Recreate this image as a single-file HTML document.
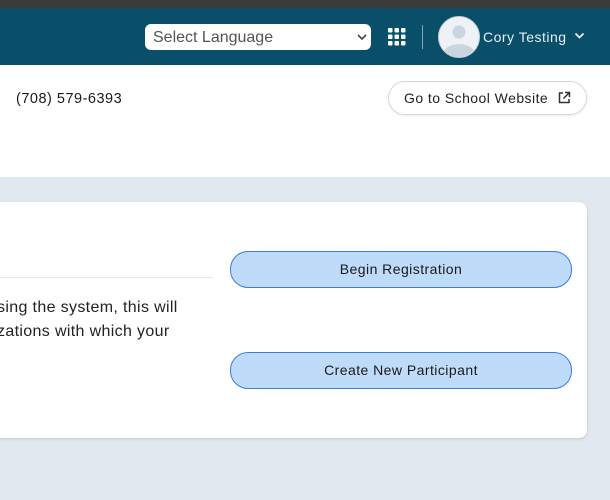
<!DOCTYPE html>
<html><head><style>
body{margin:0;width:610px;height:500px;overflow:hidden;background:#e1e8f0;font-family:"Liberation Sans",sans-serif;position:relative}
.abs{position:absolute}
</style></head><body>
<div class="abs" style="left:0;top:0;width:610px;height:8px;background:#3b3b3b"></div>
<div class="abs" style="left:0;top:8px;width:610px;height:57px;background:#0a4f69"></div>
<div class="abs" style="left:145px;top:24px;width:226px;height:26px;background:#fff;border-radius:6px"></div>
<div class="abs" style="left:153px;top:29px;font-size:16px;color:#555">Select Language</div>
<svg class="abs" style="left:357px;top:33px" width="10" height="8"><path d="M1 2l4 4 4-4" stroke="#444" stroke-width="1.6" fill="none"/></svg>
<svg class="abs" style="left:388px;top:28px" width="18" height="18" fill="#fff">
<rect x="0" y="0" width="4.5" height="4.5" rx="1"/><rect x="6.5" y="0" width="4.5" height="4.5" rx="1"/><rect x="13" y="0" width="4.5" height="4.5" rx="1"/>
<rect x="0" y="6.5" width="4.5" height="4.5" rx="1"/><rect x="6.5" y="6.5" width="4.5" height="4.5" rx="1"/><rect x="13" y="6.5" width="4.5" height="4.5" rx="1"/>
<rect x="0" y="13" width="4.5" height="4.5" rx="1"/><rect x="6.5" y="13" width="4.5" height="4.5" rx="1"/><rect x="13" y="13" width="4.5" height="4.5" rx="1"/></svg>
<div class="abs" style="left:422px;top:25px;width:1px;height:24px;background:#8aa6b4"></div>
<svg class="abs" style="left:438px;top:16px" width="42" height="42"><defs><clipPath id="c"><circle cx="21" cy="21" r="20"/></clipPath></defs>
<circle cx="21" cy="21" r="20.5" fill="#eef2f7" stroke="#c8d2dc"/><g clip-path="url(#c)" fill="#cbd5df"><circle cx="21" cy="16" r="6.5"/><ellipse cx="21" cy="40" rx="17" ry="12"/></g></svg>
<div class="abs" style="left:483px;top:29px;font-size:14px;letter-spacing:.5px;color:#e6eef3">Cory Testing</div>
<svg class="abs" style="left:574px;top:32px" width="11" height="8"><path d="M1.5 1.5l4 4 4-4" stroke="#e6eef3" stroke-width="1.8" fill="none"/></svg>
<div class="abs" style="left:0;top:65px;width:610px;height:112px;background:#fff"></div>
<div class="abs" style="left:16px;top:91px;font-size:14.5px;letter-spacing:.5px;color:#1a1a1a">(708) 579-6393</div>
<div class="abs" style="left:388px;top:81px;width:197px;height:32px;border:1px solid #cfd8e2;border-radius:17px;background:#fff;box-shadow:0 1px 2px rgba(0,0,0,.08)"></div>
<div class="abs" style="left:404px;top:90px;font-size:14px;letter-spacing:.45px;color:#222">Go to School Website</div>
<svg class="abs" style="left:557px;top:91px" width="14" height="14"><path d="M6 2H2.5v9.5H12V8M8 1.5h4.5V6M12.5 1.5L6.5 7.5" stroke="#333" stroke-width="1.5" fill="none"/></svg>
<div class="abs" style="left:-10px;top:202px;width:597px;height:236px;background:#fff;border-radius:8px;box-shadow:0 1px 3px rgba(0,0,0,.15)"></div>
<div class="abs" style="left:0;top:277px;width:213px;height:1px;background:#e3e6ea"></div>
<div class="abs" style="left:-3px;top:296px;font-size:16px;letter-spacing:.35px;color:#222;line-height:24px;white-space:nowrap">sing the system, this will<br>zations with which your</div>
<div class="abs" style="left:230px;top:251px;width:340px;height:35px;border:1px solid #3b7be0;border-radius:18px;background:#bfdbfa;text-align:center;line-height:35px;font-size:14px;letter-spacing:.45px;color:#1a1a1a">Begin Registration</div>
<div class="abs" style="left:230px;top:352px;width:340px;height:35px;border:1px solid #3b7be0;border-radius:18px;background:#bfdbfa;text-align:center;line-height:35px;font-size:14px;letter-spacing:.45px;color:#1a1a1a">Create New Participant</div>
</body></html>
